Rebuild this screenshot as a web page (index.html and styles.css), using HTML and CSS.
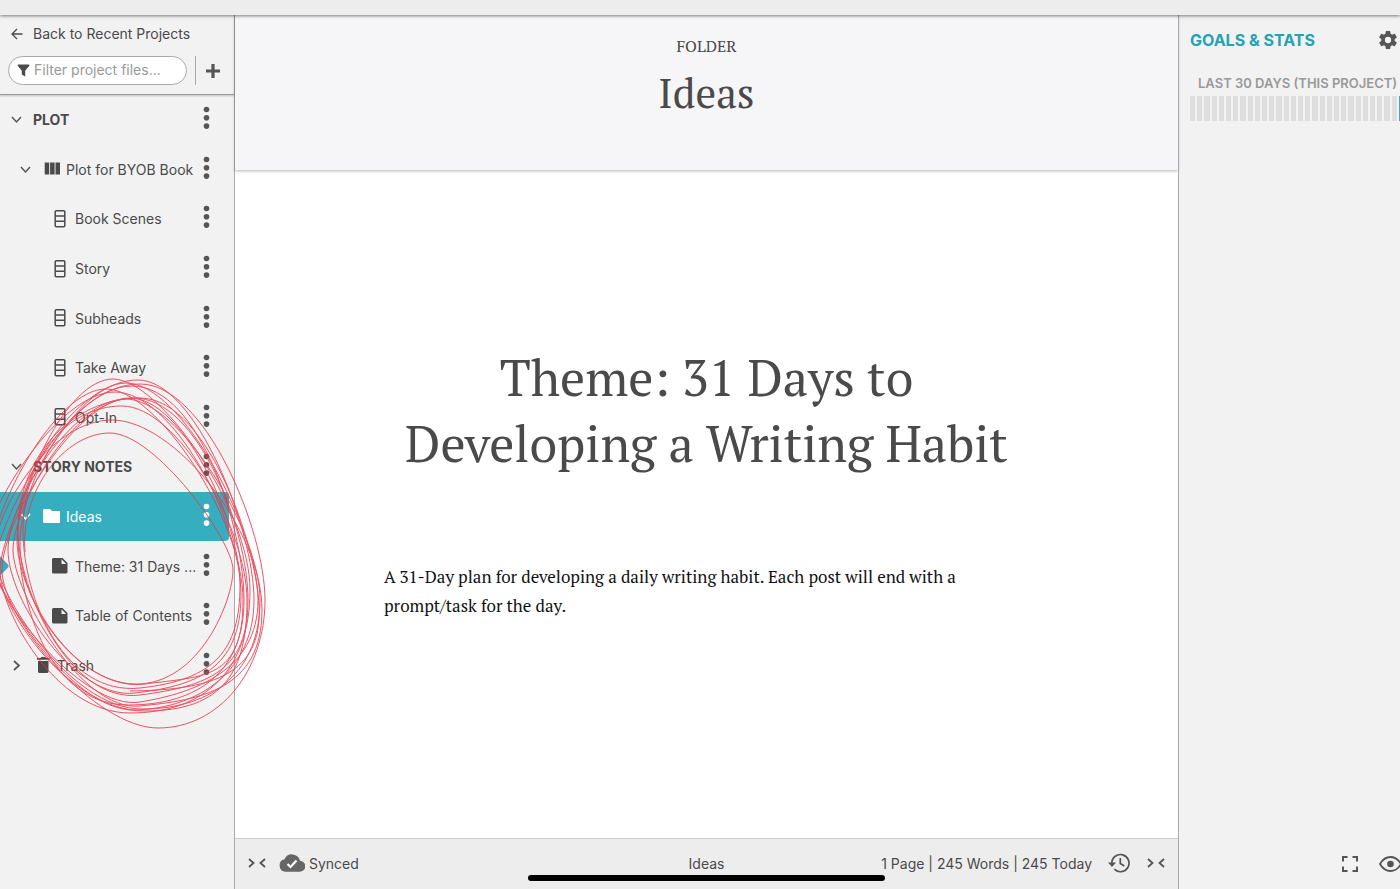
FILE: index.html
```html
<!DOCTYPE html>
<html lang="en">
<head>
    <meta charset="UTF-8">
    <meta name="viewport" content="width=device-width, initial-scale=1.0">
    <title>Ideas</title>
    <link rel="stylesheet" href="styles.css">
</head>
<body>
    <!-- Shared icons -->
    <svg class="sprite" aria-hidden="true">
        <symbol id="chevron-down" viewBox="0 0 17 17"><path d="M4 6l4.500 5L13 6" fill="none" stroke="currentColor" stroke-width="1.500"/></symbol>
        <symbol id="chevron-right" viewBox="0 0 17 17"><path d="M6 4l5 4.500-5 4.500" fill="none" stroke="currentColor" stroke-width="1.700"/></symbol>
        <symbol id="dots" viewBox="0 0 12 24"><circle cx="6.500" cy="3.500" r="2.800"/><circle cx="6.500" cy="11.800" r="2.800"/><circle cx="6.500" cy="20.100" r="2.800"/></symbol>
        <symbol id="board" viewBox="0 0 18 18"><path d="M2.700 2.500h4.500v12H2.700zM8.100 2.500h4.500v12H8.100zM13.500 2.500h4.500v12h-4.500z"/></symbol>
        <symbol id="column" viewBox="0 0 18 18"><path d="M5.200 .8h7.600a1 1 0 0 1 1 1v14a1 1 0 0 1-1 1H5.200a1 1 0 0 1-1-1v-14a1 1 0 0 1 1-1zM4.500 6h9M4.500 11.300h9" fill="none" stroke="currentColor" stroke-width="1.500"/></symbol>
        <symbol id="folder" viewBox="0 0 18 18"><path d="M2.500 2H8l2 2h7a1.500 1.500 0 0 1 1.500 1.500v9A1.500 1.500 0 0 1 17 16H2.500A1.500 1.500 0 0 1 1 14.500v-11A1.500 1.500 0 0 1 2.500 2z"/></symbol>
        <symbol id="doc" viewBox="0 0 18 18"><path fill-rule="evenodd" d="M2.500 1h9l5 5v9a1.500 1.500 0 0 1-1.500 1.500H2.500A1.500 1.500 0 0 1 1 15V2.500A1.500 1.500 0 0 1 2.500 1zM10.500 2.300V7h4.700z"/></symbol>
        <symbol id="trash" viewBox="0 0 18 18"><path d="M5 5h10.500v10.500a1.500 1.500 0 0 1-1.500 1.500H6.500A1.500 1.500 0 0 1 5 15.500zM4 2h3.500l1-1h3.500l1 1h3.500v1.700H4z"/></symbol>
        <symbol id="collapse" viewBox="0 0 20 12"><path d="M2 2l4.500 4L2 10M18 2l-4.500 4 4.500 4" fill="none" stroke="currentColor" stroke-width="1.800"/></symbol>
    </svg>

    <div class="app">
        <div class="topbar"></div>

        <aside class="sidebar">
            <div class="sidebar-head">
                <a class="back" href="#">
                    <svg width="12" height="12" viewBox="0 0 12 12"><path d="M11.500 6H1M6 1L1 6l5 5" fill="none" stroke="currentColor" stroke-width="1.300"/></svg>
                    Back to Recent Projects
                </a>
                <div class="filter-row">
                    <label class="filter">
                        <svg width="13" height="13" viewBox="0 0 13 13"><path d="M.5 1.500Q.5.500 1.500.5h10q1 0 1 1L8.200 6.700V12.500L4.800 10.500V6.700z" fill="currentColor"/></svg>
                        <input type="text" placeholder="Filter project files..." aria-label="Filter project files">
                    </label>
                    <button class="add" aria-label="Add">
                        <svg width="14" height="14" viewBox="0 0 14 14"><path d="M7 0v14M0 7h14" stroke="currentColor" stroke-width="3.200"/></svg>
                    </button>
                </div>
            </div>

            <ul class="tree">
                <li class="row section">
                    <button class="toggle" aria-label="Toggle"><svg><use href="#chevron-down"/></svg></button>
                    <a href="#">PLOT</a>
                    <button class="more" aria-label="More"><svg><use href="#dots"/></svg></button>
                </li>
                <li class="row level-1">
                    <button class="toggle" aria-label="Toggle"><svg><use href="#chevron-down"/></svg></button>
                    <a href="#"><svg><use href="#board"/></svg>Plot for BYOB Book</a>
                    <button class="more" aria-label="More"><svg><use href="#dots"/></svg></button>
                </li>
                <li class="row level-2">
                    <a href="#"><svg><use href="#column"/></svg>Book Scenes</a>
                    <button class="more" aria-label="More"><svg><use href="#dots"/></svg></button>
                </li>
                <li class="row level-2">
                    <a href="#"><svg><use href="#column"/></svg>Story</a>
                    <button class="more" aria-label="More"><svg><use href="#dots"/></svg></button>
                </li>
                <li class="row level-2">
                    <a href="#"><svg><use href="#column"/></svg>Subheads</a>
                    <button class="more" aria-label="More"><svg><use href="#dots"/></svg></button>
                </li>
                <li class="row level-2">
                    <a href="#"><svg><use href="#column"/></svg>Take Away</a>
                    <button class="more" aria-label="More"><svg><use href="#dots"/></svg></button>
                </li>
                <li class="row level-2">
                    <a href="#"><svg><use href="#column"/></svg>Opt-In</a>
                    <button class="more" aria-label="More"><svg><use href="#dots"/></svg></button>
                </li>
                <li class="row section">
                    <button class="toggle" aria-label="Toggle"><svg><use href="#chevron-down"/></svg></button>
                    <a href="#">STORY NOTES</a>
                    <button class="more" aria-label="More"><svg><use href="#dots"/></svg></button>
                </li>
                <li class="row level-1 selected">
                    <button class="toggle" aria-label="Toggle"><svg><use href="#chevron-down"/></svg></button>
                    <a href="#"><svg><use href="#folder"/></svg>Ideas</a>
                    <button class="more" aria-label="More"><svg><use href="#dots"/></svg></button>
                </li>
                <li class="row level-2 marked">
                    <a href="#"><svg><use href="#doc"/></svg>Theme: 31 Days ...</a>
                    <button class="more" aria-label="More"><svg><use href="#dots"/></svg></button>
                </li>
                <li class="row level-2">
                    <a href="#"><svg><use href="#doc"/></svg>Table of Contents</a>
                    <button class="more" aria-label="More"><svg><use href="#dots"/></svg></button>
                </li>
                <li class="row">
                    <button class="toggle" aria-label="Toggle"><svg><use href="#chevron-right"/></svg></button>
                    <a href="#"><svg><use href="#trash"/></svg>Trash</a>
                    <button class="more" aria-label="More"><svg><use href="#dots"/></svg></button>
                </li>
            </ul>
        </aside>

        <main class="editor">
            <header class="folder-head">
                <div class="kind">FOLDER</div>
                <h1>Ideas</h1>
            </header>
            <article class="page">
                <h2>Theme: 31 Days to Developing a Writing Habit</h2>
                <p>A 31-Day plan for developing a daily writing habit. Each post will end with a prompt/task for the day.</p>
            </article>
            <footer class="statusbar">
                <div class="status-left">
                    <button aria-label="Toggle left panel"><svg width="20" height="12"><use href="#collapse"/></svg></button>
                    <svg width="26" height="18" viewBox="0 0 26 18"><path fill="#666" d="M21 6.800A8.200 8.200 0 0 0 5.500 5.200 6.400 6.400 0 0 0 6.500 17.800H20.500a5.500 5.500 0 0 0 .5-11z"/><path d="M8.500 10l3 3 6-6.500" fill="none" stroke="#fff" stroke-width="2.200"/></svg>
                    <span>Synced</span>
                </div>
                <div>Ideas</div>
                <div class="status-right">
                    <span>1 Page | 245 Words | 245 Today</span>
                    <button aria-label="History"><svg width="22" height="20" viewBox="0 0 22 20"><path d="M3.800 10a8.600 8.600 0 1 1 2.500 6.200M12.300 5v5.500l4 2.500" fill="none" stroke="currentColor" stroke-width="1.700"/><path d="M0 9.500h8L4 14z" fill="currentColor"/></svg></button>
                    <button aria-label="Toggle right panel"><svg width="20" height="12"><use href="#collapse"/></svg></button>
                </div>
                <div class="home-bar"></div>
            </footer>
        </main>

        <aside class="stats">
            <div class="stats-head">
                <h3>GOALS &amp; STATS</h3>
                <button aria-label="Settings"><svg width="18" height="18" viewBox="2 2 20 20"><path fill="currentColor" d="M19.430 12.980c.04-.32.070-.64.070-.98s-.03-.66-.07-.98l2.110-1.650c.19-.15.24-.42.12-.64l-2-3.460c-.12-.22-.39-.3-.61-.22l-2.490 1c-.52-.4-1.080-.73-1.690-.98l-.38-2.650A.49.49 0 0 0 14 2h-4c-.25 0-.46.180-.49.420l-.38 2.650c-.61.250-1.170.590-1.690.980l-2.490-1c-.23-.09-.49 0-.61.220l-2 3.460c-.13.220-.07.490.120.640l2.110 1.650c-.04.320-.07.650-.07.980s.03.660.070.980l-2.110 1.650c-.19.150-.24.420-.12.640l2 3.460c.120.220.390.300.610.220l2.490-1c.52.400 1.080.730 1.690.980l.38 2.650c.03.240.240.420.490.420h4c.25 0 .46-.18.490-.42l.38-2.650c.61-.25 1.170-.59 1.690-.98l2.490 1c.23.090.490 0 .61-.22l2-3.460c.12-.22.070-.49-.12-.64zM12 15.500a3.500 3.500 0 1 1 0-7 3.500 3.500 0 0 1 0 7z"/></svg></button>
            </div>
            <div class="stats-label">LAST 30 DAYS (THIS PROJECT)</div>
            <div class="days">
                <i></i><i></i><i></i><i></i><i></i><i></i><i></i><i></i><i></i><i></i>
                <i></i><i></i><i></i><i></i><i></i><i></i><i></i><i></i><i></i><i></i>
                <i></i><i></i><i></i><i></i><i></i><i></i><i></i><i></i><i></i><i class="today"></i>
            </div>
            <div class="stats-foot">
                <button aria-label="Full screen"><svg width="16" height="16" viewBox="0 0 16 16"><path d="M1 5.500V1h4.500M10.500 1H15v4.500M15 10.500V15h-4.500M5.500 15H1v-4.500" fill="none" stroke="currentColor" stroke-width="2"/></svg></button>
                <button aria-label="Preview"><svg width="23" height="16" viewBox="0 0 23 16"><path d="M1 8Q5 1 11.500 1T22 8q-4 7-10.500 7T1 8z" fill="none" stroke="currentColor" stroke-width="1.800"/><circle cx="11.500" cy="8" r="3.300" fill="currentColor"/></svg></button>
            </div>
        </aside>
    </div>

    <!-- Pen markup over the story notes -->
    <svg class="scribble" width="280" height="740" viewBox="0 0 280 740" aria-hidden="true">
        <path d="M25 552C20 490 65 433 110 433S233 540 233 570 200 685 135 684 17 590 17 540 66 379 113 379
            S250 510 250 590 205 713 130 713 0 610 0 570 70 383 126 383
            S258 530 258 600 195 693 140 702 -8 600 -8 555 55 389 106 389
            S243 520 243 600 205 676 145 684 20 610 20 545 75 384 140 384
            S265 530 265 600 220 728 158 728 2 620 2 570 78 398 130 398
            S240 520 240 585 215 680 140 688 23 600 23 530 66 406 122 406
            S247 530 247 600 225 711 145 711 -6 600 -6 555 50 420 112 420
            S262 530 262 610 200 700 140 706 13 590 13 550 70 398 134 398
            S248 530 248 600 210 686 140 695 18 590 18 530 80 380 138 380
            S254 530 254 600 200 708 135 710 -14 580 -14 545 58 392 115 392
            S241 520 241 595 195 686 135 693 8 600 8 550 74 399 126 399
            S260 530 260 600 215 709 142 709 -4 590 -4 560 64 386 132 386
            S244 530 244 600 200 705 128 705 22 620 18 540 70 398 140 398
            S263 560 259 620 200 690 130 691"/>
    </svg>
</body>
</html>
```
FILE: styles.css
```css
* {
    box-sizing: border-box;
}
body {
    margin: 0;
    font-family: Inter, "Liberation Sans", sans-serif;
    font-size: 14px;
    color: #4a4a4a;
    background-color: #f2f2f2;
    overflow: hidden;
}
a {
    color: inherit;
    text-decoration: none;
}
button {
    padding: 0;
    border: none;
    background: none;
    color: #555;
    cursor: pointer;
    display: flex;
    align-items: center;
    justify-content: center;
}
svg {
    flex-shrink: 0;
}
.sprite {
    position: absolute;
    width: 0;
    height: 0;
}
.app {
    display: grid;
    grid-template-columns: 235px 1fr 222px;
    grid-template-rows: 15px 1fr;
    min-height: 100vh;
}
.topbar {
    grid-column: 1 / -1;
    background-color: #ededed;
    box-shadow: 0 1px 3px rgba(0, 0, 0, 0.5);
    z-index: 1;
}

/* Sidebar */
.sidebar {
    border-right: 1px solid #aaa;
}
.sidebar-head {
    height: 80px;
    padding: 8px 0 0 8px;
    border-bottom: 1px solid #999;
    box-shadow: 0 1px 2px rgba(0, 0, 0, 0.2);
}
.back {
    display: flex;
    align-items: center;
    gap: 10px;
    height: 21px;
    padding-left: 3px;
}
.filter-row {
    display: flex;
    margin-top: 12px;
}
.filter {
    display: flex;
    align-items: center;
    gap: 4px;
    width: 179px;
    height: 29px;
    padding: 0 8px;
    border: 1px solid #aaa;
    border-radius: 15px;
    background-color: #fff;
}
.filter input {
    flex: 1;
    min-width: 0;
    padding: 0 0 2px;
    border: none;
    outline: none;
    background: none;
    font-family: inherit;
    font-size: 14px;
    color: #4a4a4a;
}
.filter input::placeholder {
    color: #999;
}
.add {
    flex: 1;
    margin-left: 8px;
    padding-right: 4px;
    border-left: 1px solid #aaa;
}

/* Project tree */
.tree {
    display: grid;
    grid-auto-rows: 1fr;
    min-height: 595px;
    margin: 0;
    padding: 0;
    list-style: none;
}
.row {
    display: flex;
    align-items: center;
    gap: 8px;
    margin-right: 5px;
    padding: 0 17px 0 8px;
}
.row a {
    flex: 1;
    display: flex;
    align-items: center;
    gap: 6px;
    white-space: nowrap;
}
.row a svg {
    width: 18px;
    height: 18px;
    fill: #4a4a4a;
    overflow: visible;
}
.toggle svg {
    width: 17px;
    height: 17px;
}
.more svg {
    width: 12px;
    height: 24px;
    fill: #555;
}
.row .more {
    margin-left: -8px;
    padding-bottom: 3px;
}
.section {
    font-weight: 700;
}
.level-1 {
    padding-left: 17px;
}
.level-2 {
    padding-left: 51px;
}
.selected {
    background-color: #35afbf;
    border-radius: 0 4px 4px 0;
    color: #fff;
}
.selected button {
    color: #fff;
}
.selected svg,
.selected a svg {
    fill: #fff;
}
.marked {
    position: relative;
}
.marked::before {
    content: "";
    position: absolute;
    left: -12px;
    width: 18px;
    height: 18px;
    border-radius: 3px;
    background-color: #35afbf;
    transform: rotate(45deg);
}

/* Editor */
.editor {
    display: flex;
    flex-direction: column;
    background-color: #fff;
}
.folder-head {
    height: 155px;
    padding-top: 19px;
    text-align: center;
    font-family: "PT Serif", "Liberation Serif", serif;
    background-color: #f6f6f9;
    box-shadow: 0 1px 3px rgba(0, 0, 0, 0.3);
}
.kind {
    font-size: 16px;
    line-height: 24px;
}
h1 {
    margin: 7px 0 0;
    font-size: 41px;
    line-height: 56px;
    font-weight: normal;
}
.page {
    flex: 1;
    width: 100%;
    max-width: 645px;
    margin: 0 auto;
    padding-top: 174px;
    font-family: "PT Serif", "Liberation Serif", serif;
}
h2 {
    margin: 0;
    text-align: center;
    font-size: 50px;
    line-height: 66px;
    font-weight: normal;
}
.page p {
    margin: 86px 0 0;
    padding-right: 48px;
    font-size: 17px;
    line-height: 29px;
    color: #111;
}
.statusbar {
    position: relative;
    display: grid;
    grid-template-columns: 1fr auto 1fr;
    align-items: center;
    height: 51px;
    padding: 0 12px 2px;
    border-top: 1px solid #ccc;
    background-color: #ededed;
}
.status-left,
.status-right {
    display: flex;
    align-items: center;
}
.status-left {
    gap: 4px;
}
.status-left button {
    margin-right: 8px;
}
.status-right {
    justify-content: flex-end;
    gap: 16px;
}
.home-bar {
    position: absolute;
    left: 50%;
    bottom: 8px;
    width: 357px;
    height: 6px;
    margin-left: -179px;
    border-radius: 3px;
    background-color: #000;
}

/* Goals and stats */
.stats {
    display: flex;
    flex-direction: column;
    border-left: 1px solid #aaa;
    padding-left: 11px;
    overflow: hidden;
}
.stats-head {
    display: flex;
    justify-content: space-between;
    align-items: center;
    height: 50px;
    padding-right: 3px;
}
h3 {
    margin: 0;
    font-size: 16px;
    font-weight: 700;
    color: #24a3b3;
}
.stats-label {
    padding: 10px 0 5px 8px;
    font-size: 13px;
    line-height: 16px;
    font-weight: 600;
    color: #999;
    white-space: nowrap;
}
.days {
    display: flex;
    gap: 2px;
    width: 214px;
    height: 25px;
}
.days i {
    flex: 1;
    background-color: #dedede;
}
.days .today {
    background-color: #35afbf;
}
.stats-foot {
    display: flex;
    gap: 21px;
    margin-top: auto;
    padding: 0 0 17px 152px;
}

.scribble {
    position: absolute;
    left: 0;
    top: 0;
    z-index: 2;
    fill: none;
    stroke: #e8374a;
    stroke-width: 1;
    opacity: 0.85;
    pointer-events: none;
}
```
